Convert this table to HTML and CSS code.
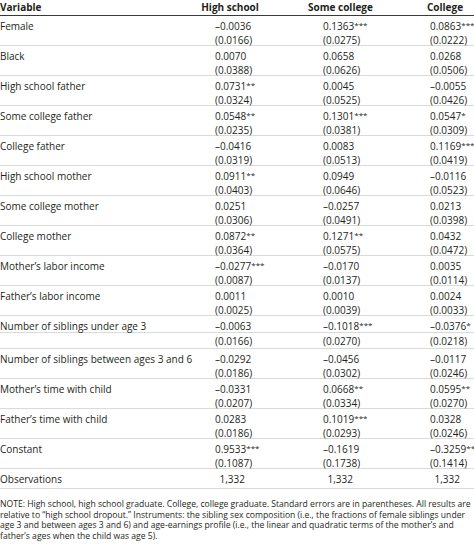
FILE: index.html
```html
<!DOCTYPE html>
<html>
<head>
<meta charset="utf-8">
<link rel="stylesheet" href="styles.css">
</head>
<body>
<div class="table">
  <div class="grid head">
    <div class="var">Variable</div>
    <div class="hd">High school</div>
    <div class="hd">Some college</div>
    <div class="hd">College</div>
  </div>

  <div class="grid row">
    <div class="var">Female</div>
    <div class="c"><span class="v">–0.0036</span><span class="v se">(0.0166)</span></div>
    <div class="c"><span class="v">0.1363<span class="st">***</span></span><span class="v se">(0.0275)</span></div>
    <div class="c"><span class="v">0.0863<span class="st">***</span></span><span class="v se">(0.0222)</span></div>
  </div>

  <div class="grid row">
    <div class="var">Black</div>
    <div class="c"><span class="v">0.0070</span><span class="v se">(0.0388)</span></div>
    <div class="c"><span class="v">0.0658</span><span class="v se">(0.0626)</span></div>
    <div class="c"><span class="v">0.0268</span><span class="v se">(0.0506)</span></div>
  </div>

  <div class="grid row">
    <div class="var">High school father</div>
    <div class="c"><span class="v">0.0731<span class="st">**</span></span><span class="v se">(0.0324)</span></div>
    <div class="c"><span class="v">0.0045</span><span class="v se">(0.0525)</span></div>
    <div class="c"><span class="v">–0.0055</span><span class="v se">(0.0426)</span></div>
  </div>

  <div class="grid row">
    <div class="var">Some college father</div>
    <div class="c"><span class="v">0.0548<span class="st">**</span></span><span class="v se">(0.0235)</span></div>
    <div class="c"><span class="v">0.1301<span class="st">***</span></span><span class="v se">(0.0381)</span></div>
    <div class="c"><span class="v">0.0547<span class="st">*</span></span><span class="v se">(0.0309)</span></div>
  </div>

  <div class="grid row">
    <div class="var">College father</div>
    <div class="c"><span class="v">–0.0416</span><span class="v se">(0.0319)</span></div>
    <div class="c"><span class="v">0.0083</span><span class="v se">(0.0513)</span></div>
    <div class="c"><span class="v">0.1169<span class="st">***</span></span><span class="v se">(0.0419)</span></div>
  </div>

  <div class="grid row">
    <div class="var">High school mother</div>
    <div class="c"><span class="v">0.0911<span class="st">**</span></span><span class="v se">(0.0403)</span></div>
    <div class="c"><span class="v">0.0949</span><span class="v se">(0.0646)</span></div>
    <div class="c"><span class="v">–0.0116</span><span class="v se">(0.0523)</span></div>
  </div>

  <div class="grid row">
    <div class="var">Some college mother</div>
    <div class="c"><span class="v">0.0251</span><span class="v se">(0.0306)</span></div>
    <div class="c"><span class="v">–0.0257</span><span class="v se">(0.0491)</span></div>
    <div class="c"><span class="v">0.0213</span><span class="v se">(0.0398)</span></div>
  </div>

  <div class="grid row">
    <div class="var">College mother</div>
    <div class="c"><span class="v">0.0872<span class="st">**</span></span><span class="v se">(0.0364)</span></div>
    <div class="c"><span class="v">0.1271<span class="st">**</span></span><span class="v se">(0.0575)</span></div>
    <div class="c"><span class="v">0.0432</span><span class="v se">(0.0472)</span></div>
  </div>

  <div class="grid row">
    <div class="var">Mother’s labor income</div>
    <div class="c"><span class="v">–0.0277<span class="st">***</span></span><span class="v se">(0.0087)</span></div>
    <div class="c"><span class="v">–0.0170</span><span class="v se">(0.0137)</span></div>
    <div class="c"><span class="v">0.0035</span><span class="v se">(0.0114)</span></div>
  </div>

  <div class="grid row">
    <div class="var">Father’s labor income</div>
    <div class="c"><span class="v">0.0011</span><span class="v se">(0.0025)</span></div>
    <div class="c"><span class="v">0.0010</span><span class="v se">(0.0039)</span></div>
    <div class="c"><span class="v">0.0024</span><span class="v se">(0.0033)</span></div>
  </div>

  <div class="split">
    <div class="grid sub top">
      <div class="var">Number of siblings under age 3</div>
      <div class="c"><span class="v">–0.0063</span></div>
      <div class="c"><span class="v">–0.1018<span class="st">***</span></span></div>
      <div class="c"><span class="v">–0.0376<span class="st">*</span></span></div>
    </div>
    <div class="grid sub bot">
      <div class="var"></div>
      <div class="c"><span class="v se">(0.0166)</span></div>
      <div class="c"><span class="v se">(0.0270)</span></div>
      <div class="c"><span class="v se">(0.0218)</span></div>
    </div>
  </div>

  <div class="grid row">
    <div class="var">Number of siblings between ages 3 and 6</div>
    <div class="c"><span class="v">–0.0292</span><span class="v se">(0.0186)</span></div>
    <div class="c"><span class="v">–0.0456</span><span class="v se">(0.0302)</span></div>
    <div class="c"><span class="v">–0.0117</span><span class="v se">(0.0246)</span></div>
  </div>

  <div class="grid row">
    <div class="var">Mother’s time with child</div>
    <div class="c"><span class="v">–0.0331</span><span class="v se">(0.0207)</span></div>
    <div class="c"><span class="v">0.0668<span class="st">**</span></span><span class="v se">(0.0334)</span></div>
    <div class="c"><span class="v">0.0595<span class="st">**</span></span><span class="v se">(0.0270)</span></div>
  </div>

  <div class="grid row">
    <div class="var">Father’s time with child</div>
    <div class="c"><span class="v">0.0283</span><span class="v se">(0.0186)</span></div>
    <div class="c"><span class="v">0.1019<span class="st">***</span></span><span class="v se">(0.0293)</span></div>
    <div class="c"><span class="v">0.0328</span><span class="v se">(0.0246)</span></div>
  </div>

  <div class="grid row">
    <div class="var">Constant</div>
    <div class="c"><span class="v">0.9533<span class="st">***</span></span><span class="v se">(0.1087)</span></div>
    <div class="c"><span class="v">–0.1619</span><span class="v se">(0.1738)</span></div>
    <div class="c"><span class="v">–0.3259<span class="st">**</span></span><span class="v se">(0.1414)</span></div>
  </div>

  <div class="grid row obs">
    <div class="var">Observations</div>
    <div class="c"><span class="v">1,332</span></div>
    <div class="c"><span class="v">1,332</span></div>
    <div class="c"><span class="v">1,332</span></div>
  </div>
</div>

<p class="note">NOTE: High school, high school graduate. College, college graduate. Standard errors are in parentheses. All results are<br>relative to “high school dropout.” Instruments: the sibling sex composition (i.e., the fractions of female siblings under<br>age 3 and between ages 3 and 6) and age-earnings profile (i.e., the linear and quadratic terms of the mother’s and<br>father’s ages when the child was age 5).</p>
</body>
</html>
```

FILE: styles.css
```css
html, body {
  margin: 0;
  padding: 0;
  background: #ffffff;
}

body {
  width: 474px;
  font-family: "Open Sans", "Noto Sans", sans-serif;
  font-size: 10px;
  color: #231f20;
  overflow: hidden;
}

.table {
  width: 474px;
}

.grid {
  display: grid;
  grid-template-columns: 152px 60px 60px 58px;
  column-gap: 48px;
}

.head {
  height: 15px;
  border-bottom: 1.5px solid #3a3a3a;
  font-weight: 700;
  line-height: 14px;
}

.hd {
  text-align: center;
  white-space: nowrap;
}

.var {
  white-space: nowrap;
  line-height: 14px;
  padding-top: 3px;
}

.head .var {
  padding-top: 0;
}

.row {
  height: 29px;
  border-bottom: 1px solid #dadada;
}

.c {
  display: flex;
  flex-direction: column;
  align-items: center;
  padding-top: 3px;
}

.v {
  display: inline-block;
  width: 30px;
  text-align: right;
  white-space: nowrap;
  line-height: 14px;
}

.se {
  width: 33px;
  margin-right: -3px;
}

.st {
  display: inline-block;
  width: 0;
  font-size: 8px;
  vertical-align: top;
  line-height: 12px;
}

.split {
  border-bottom: 1px solid #dadada;
}

.sub.top {
  height: 16px;
  border-bottom: 1px solid #dadada;
}

.sub.bot {
  height: 15px;
}

.sub.bot .c {
  padding-top: 1px;
}

.obs {
  height: 19px;
}

.note {
  margin: 10px 0 0 0;
  font-size: 8.6px;
  line-height: 10.5px;
  white-space: nowrap;
}
```
